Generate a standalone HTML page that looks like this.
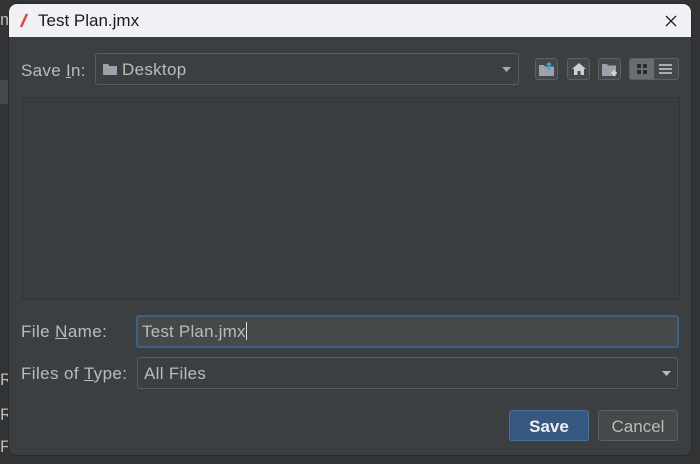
<!DOCTYPE html>
<html><head><style>
body{margin:0;width:700px;height:464px;background:#313335;position:relative;overflow:hidden;font-family:"Liberation Sans","DejaVu Sans",sans-serif;font-size:17px;color:#bbbbbb}
.a{position:absolute}
.dlg{left:9px;top:4px;width:682px;height:451px;background:#3c3f41;border-radius:8px;overflow:hidden;box-shadow:0 0 0 1px #2a2a2a}
.title{left:0;top:0;width:682px;height:33px;background:#f0f1f5;color:#1b1b1b;font-size:17px}
.box{border:1px solid #5a5d60;border-radius:3px;background:#3c3f41;box-sizing:border-box}
.ib{width:23px;height:22px;border:1px solid #5e6164;border-radius:3px;background:#45484a;box-sizing:border-box}
u{text-decoration:underline}
</style></head><body>
<div class="a" style="left:0;top:80px;width:9px;height:24px;background:#45494a"></div>
<div class="a" style="left:0;top:10px;color:#bbb">m</div>
<div class="a" style="left:0;top:370px;color:#bbb">R</div>
<div class="a" style="left:0;top:405px;color:#bbb">R</div>
<div class="a" style="left:0;top:437px;color:#bbb">F</div>
<div class="a dlg">
 <div class="a title">
  <svg class="a" style="left:10px;top:9px" width="10" height="16"><path d="M8 1 L2 14" stroke="#e0483b" stroke-width="2.5"/></svg>
  <div class="a" style="left:29px;top:7px">Test Plan.jmx</div>
  <svg class="a" style="left:656px;top:11px" width="12" height="12"><path d="M1 1L11 11M11 1L1 11" stroke="#222" stroke-width="1.3"/></svg>
 </div>
 <div class="a" style="left:12px;top:57px;letter-spacing:0.3px">Save <u>I</u>n:</div>
 <div class="a box" style="left:86px;top:49px;width:424px;height:32px">
  <svg class="a" style="left:7px;top:9px" width="14" height="12"><path d="M0 1h5l1.5 2H14v9H0z" fill="#9aa3ab"/></svg>
  <div class="a" style="left:26px;top:6px;letter-spacing:0.3px">Desktop</div>
  <svg class="a" style="left:406px;top:13px" width="9" height="6"><path d="M0 0h9L4.5 5z" fill="#aaa"/></svg>
 </div>
 <div class="a ib" style="left:526px;top:54px"><svg class="a" style="left:3px;top:3px" width="16" height="14"><path d="M0 3h5l1 1.5h9V14H0z" fill="#9aa3ab"/><path d="M10 1v7M8 3l2-2 2 2" stroke="#3aa0e0" stroke-width="1.6" fill="none"/></svg></div>
 <div class="a ib" style="left:558px;top:54px"><svg class="a" style="left:4px;top:3px" width="14" height="14"><path d="M7 1L0 7h2v6h3.5V9h3v4H12V7h2z" fill="#d0d0d0"/></svg></div>
 <div class="a ib" style="left:589px;top:54px"><svg class="a" style="left:3px;top:3px" width="16" height="14"><path d="M0 2h5l1 1.5h8V14H0z" fill="#9aa3ab"/><path d="M12 8v6M9 11h6" stroke="#ddd" stroke-width="1.6"/></svg></div>
 <div class="a" style="left:620px;top:54px;width:50px;height:22px;border:1px solid #5e6164;border-radius:3px;box-sizing:border-box;overflow:hidden;background:#45484a">
  <div class="a" style="left:0;top:0;width:24px;height:22px;background:#6a6d70"></div>
  <svg class="a" style="left:7px;top:5px" width="10" height="10"><path d="M0 0h4v4H0zM6 0h4v4H6zM0 6h4v4H0zM6 6h4v4H6z" fill="#2b2b2b"/></svg>
  <svg class="a" style="left:29px;top:5px" width="13" height="10"><path d="M0 1h13M0 5h13M0 9h13" stroke="#ccc" stroke-width="1.5"/></svg>
 </div>
 <div class="a" style="left:13px;top:93px;width:658px;height:203px;background:#3a3d3f;border:1px solid #323436;box-sizing:border-box"></div>
 <div class="a" style="left:12px;top:318px;letter-spacing:0.4px">File <u>N</u>ame:</div>
 <div class="a" style="left:127px;top:311px;width:543px;height:33px;border:2px solid #3d6185;border-radius:3px;box-sizing:border-box;background:#45494a">
  <div class="a" style="left:4px;top:5px;letter-spacing:0.2px">Test Plan.jmx<span style="display:inline-block;width:1px;height:18px;background:#ddd;vertical-align:-3px"></span></div>
 </div>
 <div class="a" style="left:12px;top:360px;letter-spacing:0.4px">Files of <u>T</u>ype:</div>
 <div class="a box" style="left:128px;top:353px;width:541px;height:32px">
  <div class="a" style="left:6px;top:6px;letter-spacing:0.3px">All Files</div>
  <svg class="a" style="left:524px;top:13px" width="9" height="6"><path d="M0 0h9L4.5 5z" fill="#bbb"/></svg>
 </div>
 <div class="a" style="left:500px;top:406px;width:80px;height:31px;background:#365880;border:1px solid #4c709a;border-radius:3px;box-sizing:border-box;color:#eee;font-weight:bold;text-align:center;line-height:31px">Save</div>
 <div class="a" style="left:589px;top:406px;width:80px;height:31px;background:#45494a;border:1px solid #5e6164;border-radius:3px;box-sizing:border-box;color:#bbb;text-align:center;line-height:31px">Cancel</div>
</div>
</body></html>
